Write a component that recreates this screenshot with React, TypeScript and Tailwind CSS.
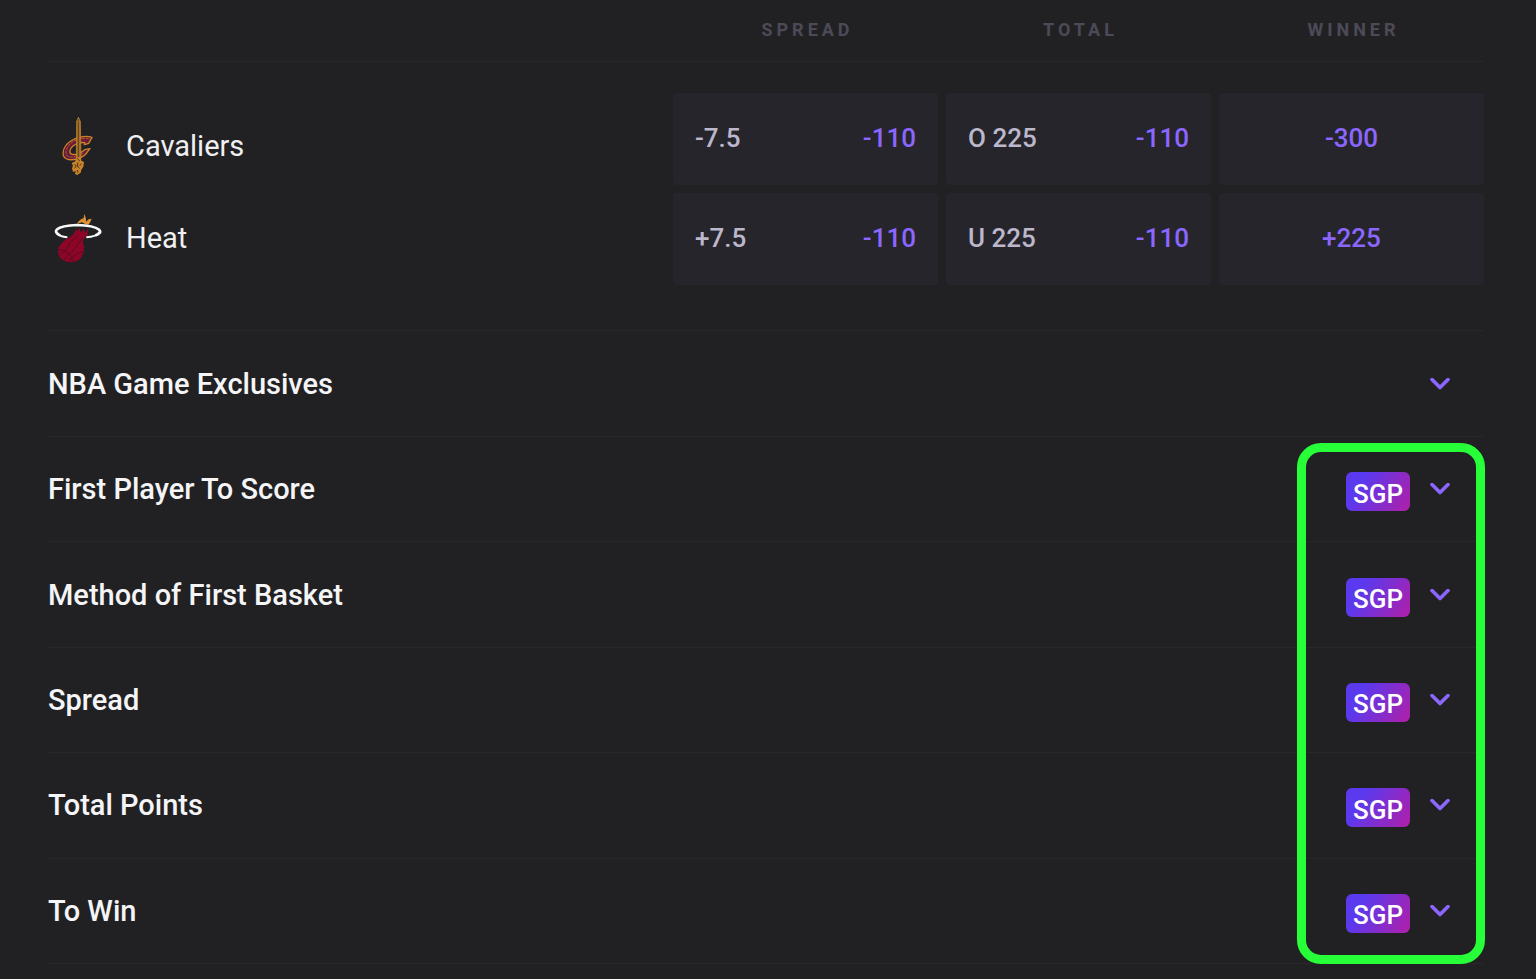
import { useState } from 'react'

const CavaliersLogo = () => (
  <svg viewBox="66 36 96 174" className="h-[58px] w-8" aria-hidden="true">
    {/* C */}
    <path
      d="M156 97 C138 91 112 95 92 108 C76 119 67 136 70 151 C74 166 96 166 112 162 C126 158 138 149 145 137 L150 131 L134 134 C124 143 108 150 97 148 C86 145 88 133 98 124 C108 115 124 111 134 113 L133 119 L146 115 Z"
      fill="#6b1a38"
      stroke="#c98429"
      strokeWidth="4"
      strokeLinejoin="round"
    />
    <path
      d="M146 101 C126 97 104 104 91 116 C78 129 74 145 82 153 C92 160 112 156 128 145"
      fill="none"
      stroke="#c98429"
      strokeWidth="2"
      strokeDasharray="9 3"
    />
    {/* Sword */}
    <path d="M115 37 L121 49 L123 158 L109 158 L110 49 Z" fill="#a8702a" stroke="#d08a2c" strokeWidth="2" />
    <path d="M115 50 V156" stroke="#54401f" strokeWidth="3" />
    <path d="M113 42 h4 v6 h-4z" fill="#3f5a5c" />
    {/* Hilt */}
    <path
      d="M109 158 H123 L124 167 L132 171 L130 185 L124 194 L122 203 L112 210 L105 207 L107 198 L99 201 L96 190 L99 182 L95 174 L106 169 Z"
      fill="#c98429"
    />
    <path
      d="M112 160 L119 168 M103 178 L109 182 L104 190 M114 172 L112 184 L119 190 M124 176 L119 182 M112 195 L114 203"
      fill="none"
      stroke="#4a3320"
      strokeWidth="3"
    />
  </svg>
)

const HeatLogo = () => (
  <svg viewBox="42 26 144 150" className="h-[50px] w-12" aria-hidden="true">
    {/* Flame tips */}
    <path
      d="M111 58 C116 49 124 43 131 42 L133 28 L138 43 L138 52 L146 45 L155 43 L150 55 L144 62 L134 58 L126 54 Z"
      fill="#dc9233"
    />
    {/* Ring, back half */}
    <path d="M60 93 C38 82 42 65 112 62 C184 64 194 86 166 93" fill="none" stroke="#f8f8f8" strokeWidth="8" />
    {/* Ball and tail */}
    <path
      d="M108 70 L111 81 L119 70 L122 85 L132 72 L134 86 L144 75 L143 91 L134 100 L128 112 C136 130 132 151 119 164 C103 178 76 177 62 162 C50 149 52 128 65 117 L78 105 L94 96 C100 89 107 82 108 70 Z"
      fill="#8e0528"
    />
    <path
      d="M53 137 C72 134 88 142 101 172 M58 154 C68 145 82 136 88 118 C93 108 108 103 113 92 M71 169 C79 155 104 139 113 121 L128 101 M88 174 C92 158 109 148 128 141"
      fill="none"
      stroke="#39121c"
      strokeWidth="2"
    />
    {/* Ring, front ends */}
    <path d="M49 84 C56 94 68 98 82 99" fill="none" stroke="#f8f8f8" strokeWidth="6" />
    <path d="M178 83 C172 93 158 98 139 99" fill="none" stroke="#f8f8f8" strokeWidth="6" />
  </svg>
)

const teams = [
  { name: 'Cavaliers', Logo: CavaliersLogo },
  { name: 'Heat', Logo: HeatLogo },
]

const odds = [
  { line: '-7.5', price: '-110' },
  { line: 'O 225', price: '-110' },
  { price: '-300' },
  { line: '+7.5', price: '-110' },
  { line: 'U 225', price: '-110' },
  { price: '+225' },
]

const sgpMarkets = ['First Player To Score', 'Method of First Basket', 'Spread', 'Total Points', 'To Win']

const MarketRow = ({ title, sgp = false }: { title: string; sgp?: boolean }) => {
  const [open, setOpen] = useState(false)

  return (
    <button
      type="button"
      aria-expanded={open}
      onClick={() => setOpen(!open)}
      className="flex w-full items-center border-b border-[#28282b] pr-[34px] text-left"
    >
      <span className="flex-1 text-[29px] leading-9 font-medium text-[#f5f5f7]">{title}</span>
      {sgp && (
        <span className="mt-[5px] mr-5 flex h-[39px] w-16 items-center justify-center rounded-md bg-[linear-gradient(120deg,#5b39ee_25%,#b01fa8_100%)] pt-1 text-[26px] leading-8 font-medium text-white">
          SGP
        </span>
      )}
      <svg viewBox="0 0 20 12" className="h-3 w-5" fill="none" aria-hidden="true">
        <path d="M2 1.5 L10 9.5 L18 1.5" stroke="#8b66ff" strokeWidth="3.6" strokeLinecap="round" strokeLinejoin="round" />
      </svg>
    </button>
  )
}

export default function App() {
  return (
    <main className="min-h-screen bg-[#212123] pr-[52px] pl-12 font-[Roboto,sans-serif]">
      <header className="flex h-[62px] items-center justify-end border-b border-[#28282b] pb-0.5">
        <div className="grid w-[811px] grid-cols-3 gap-2 text-center text-lg font-bold tracking-[4px] text-[#4d4a58]">
          <span className="pl-1">SPREAD</span>
          <span className="pl-1">TOTAL</span>
          <span className="pl-1">WINNER</span>
        </div>
      </header>

      <section className="flex border-b border-[#28282b] pt-[31px] pb-[45px]">
        <div className="flex-1 pt-[7px]">
          {teams.map(({ name, Logo }) => (
            <div key={name} className="flex h-[92px] items-center gap-[18px]">
              <div className="flex w-[60px] justify-center">
                <Logo />
              </div>
              <span className="text-[29px] leading-9 text-[#f0f0f2]">{name}</span>
            </div>
          ))}
        </div>

        <div className="grid w-[811px] grid-cols-3 gap-2">
          {odds.map(({ line, price }, i) => (
            <button
              key={i}
              type="button"
              className={`flex h-[92px] items-center rounded-sm bg-[#26252b] px-[22px] pb-0.5 text-[26px] leading-8 font-medium ${
                line ? 'justify-between' : 'justify-center'
              }`}
            >
              {line && <span className="text-[#bcb7cb]">{line}</span>}
              <span className="text-[#8b66ff]">{price}</span>
            </button>
          ))}
        </div>
      </section>

      <div className="grid h-[106px]">
        <MarketRow title="NBA Game Exclusives" />
      </div>

      <section className="relative">
        <div className="grid min-h-[527px] auto-rows-fr">
          {sgpMarkets.map((title) => (
            <MarketRow key={title} title={title} sgp />
          ))}
        </div>
        {/* Highlight around the SGP badges */}
        <div className="pointer-events-none absolute top-[6px] -right-px bottom-0 w-[188px] rounded-3xl border-[9px] border-[#27ff38]" />
      </section>
    </main>
  )
}
